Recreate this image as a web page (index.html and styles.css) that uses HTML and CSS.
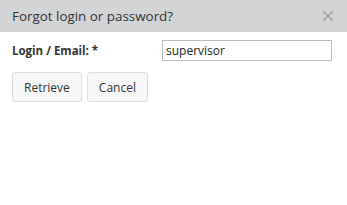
FILE: index.html
```html
<!DOCTYPE html>
<html lang="en">
<head>
  <meta charset="UTF-8">
  <title>Forgot login or password?</title>
  <link rel="stylesheet" href="styles.css">
</head>
<body>
  <div class="dialog">
    <div class="dialog-header">
      <span class="dialog-title">Forgot login or password?</span>
      <button class="close-btn" aria-label="Close">
        <svg width="12" height="12" viewBox="0 0 12 12"><path d="M1 1 L11 11 M11 1 L1 11" stroke="#9a9b9c" stroke-width="1.3" fill="none"/></svg>
      </button>
    </div>
    <div class="dialog-body">
      <div class="form-row">
        <label class="form-label" for="login">Login / Email: *</label>
        <input class="form-input" id="login" type="text" value="supervisor">
      </div>
      <div class="button-group">
        <button class="btn">Retrieve</button>
        <button class="btn">Cancel</button>
      </div>
    </div>
  </div>
</body>
</html>
```

FILE: styles.css
```css
* {
  margin: 0;
  padding: 0;
  box-sizing: border-box;
  font-family: 'Open Sans', 'Noto Sans', sans-serif;
}

body {
  background: #fff;
  width: 347px;
  height: 205px;
  overflow: hidden;
}

.dialog-header {
  height: 32px;
  background: #d3d4d5;
  display: flex;
  align-items: center;
  justify-content: space-between;
  padding: 0 12px;
}

.dialog-title {
  font-size: 13.4px;
  color: #333;
}

.close-btn {
  background: none;
  border: none;
  width: 12px;
  height: 12px;
  display: flex;
  cursor: pointer;
  margin-right: 1px;
}

.dialog-body {
  padding: 8px 12px;
}

.form-row {
  display: flex;
  align-items: center;
  height: 21px;
}

.form-label {
  width: 150px;
  font-size: 11.5px;
  font-weight: bold;
  color: #333;
}

.form-input {
  width: 170px;
  height: 21px;
  border: 1px solid #bbb;
  padding: 0 3px;
  font-size: 12px;
  color: #222;
  outline: none;
}

.button-group {
  display: flex;
  gap: 5px;
  margin-top: 11px;
}

.btn {
  height: 30px;
  padding: 0 11px;
  font-size: 12px;
  color: #333;
  background: #f7f7f7;
  border: 1px solid #ddd;
  border-radius: 3px;
  cursor: pointer;
}
```
